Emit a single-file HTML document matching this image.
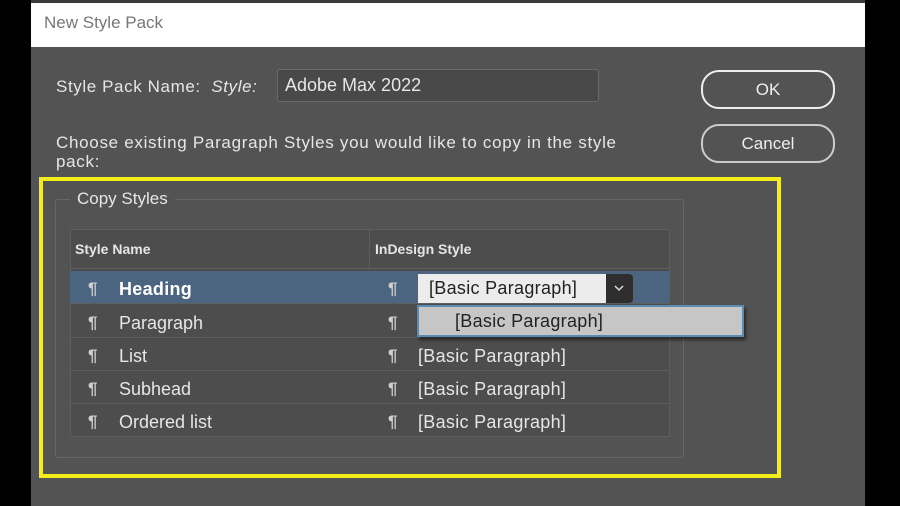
<!DOCTYPE html>
<html><head><style>
body{margin:0;width:900px;height:506px;background:#000;position:relative;overflow:hidden;font-family:"Liberation Sans",sans-serif;}
.a{position:absolute;}
.t{color:#e6e6e6;font-size:17px;white-space:nowrap;}
.row{position:absolute;left:70px;width:600px;height:32px;border-bottom:1px solid #5e5e5e;}
.pm{position:absolute;color:#cfcfcf;font-size:17px;font-weight:bold;}
</style></head><body>
<div class="a" style="left:31px;top:0;width:834px;height:3px;background:#3a3a3a"></div>
<div class="a" style="left:31px;top:3px;width:834px;height:44px;background:#fff"></div>
<div class="a" style="left:44px;top:13px;font-size:17px;color:#777">New Style Pack</div>
<div class="a" style="left:31px;top:47px;width:834px;height:459px;background:#535353"></div>
<div class="a t" style="left:56px;top:77px;letter-spacing:0.6px">Style Pack Name:&nbsp;&nbsp;<i>Style:</i></div>
<div class="a" style="left:277px;top:69px;width:320px;height:31px;background:#494949;border:1px solid #6a6a6a;border-radius:3px"></div>
<div class="a t" style="left:285px;top:75px;font-size:18px">Adobe Max 2022</div>
<div class="a" style="left:701px;top:70px;width:130px;height:35px;border:2px solid #eee;border-radius:18px;color:#eee;font-size:17px;text-align:center;line-height:35px">OK</div>
<div class="a" style="left:701px;top:124px;width:130px;height:35px;border:2px solid #ccc;border-radius:18px;color:#eee;font-size:17px;text-align:center;line-height:35px">Cancel</div>
<div class="a t" style="left:56px;top:133px;line-height:19px;letter-spacing:0.7px">Choose existing Paragraph Styles you would like to copy in the style<br>pack:</div>
<div class="a" style="left:55px;top:199px;width:629px;height:259px;border:1px solid #666;border-radius:3px;box-sizing:border-box"></div>
<div class="a t" style="left:70px;top:189px;background:#535353;padding:0 7px">Copy Styles</div>
<div class="a" style="left:70px;top:229px;width:600px;height:208px;background:#4d4d4d;border:1px solid #5e5e5e;box-sizing:border-box"></div>
<div class="a" style="left:369px;top:230px;width:1px;height:38px;background:#5e5e5e"></div>
<div class="a" style="left:70px;top:268px;width:600px;height:1px;background:#5e5e5e"></div>
<div class="a t" style="left:75px;top:241px;font-size:14px;font-weight:bold">Style Name</div>
<div class="a t" style="left:375px;top:241px;font-size:14px;font-weight:bold">InDesign Style</div>
<div class="row" style="top:271px;background:#4b6480"></div>
<div class="row" style="top:305px"></div>
<div class="row" style="top:338px"></div>
<div class="row" style="top:371px"></div>
<div class="row" style="top:404px;border:none"></div>
<div class="pm" style="left:88px;top:279px">¶</div><div class="a t" style="left:119px;top:279px;font-weight:bold;color:#fff;font-size:18px;letter-spacing:0.3px">Heading</div>
<div class="pm" style="left:88px;top:313px">¶</div><div class="a t" style="left:119px;top:313px;font-size:18px">Paragraph</div>
<div class="pm" style="left:88px;top:346px">¶</div><div class="a t" style="left:119px;top:346px;font-size:18px">List</div>
<div class="pm" style="left:88px;top:379px">¶</div><div class="a t" style="left:119px;top:379px;font-size:18px">Subhead</div>
<div class="pm" style="left:88px;top:412px">¶</div><div class="a t" style="left:119px;top:412px;font-size:18px">Ordered list</div>
<div class="pm" style="left:388px;top:279px">¶</div><div class="pm" style="left:388px;top:313px">¶</div><div class="pm" style="left:388px;top:346px">¶</div><div class="pm" style="left:388px;top:379px">¶</div><div class="pm" style="left:388px;top:412px">¶</div>
<div class="a" style="left:418px;top:274px;width:188px;height:29px;background:#ececec"></div>
<div class="a" style="left:606px;top:274px;width:27px;height:29px;background:#2e2e2e;border-radius:0 4px 4px 0"></div>
<svg class="a" style="left:613px;top:284px" width="12" height="8"><path d="M2 2 L6 6 L10 2" stroke="#ddd" stroke-width="1.5" fill="none"/></svg>
<div class="a t" style="left:429px;top:278px;color:#222;font-size:18px;letter-spacing:0.3px">[Basic Paragraph]</div>
<div class="a" style="left:417px;top:305px;width:327px;height:32px;background:#5a8db5;box-shadow:2px 3px 3px rgba(0,0,0,.5)"></div>
<div class="a" style="left:419px;top:307px;width:323px;height:28px;background:#c6c6c6"></div>
<div class="a t" style="left:455px;top:311px;color:#222;font-size:18px;letter-spacing:0.3px">[Basic Paragraph]</div>
<div class="a t" style="left:418px;top:346px;font-size:18px;letter-spacing:0.3px">[Basic Paragraph]</div>
<div class="a t" style="left:418px;top:379px;font-size:18px;letter-spacing:0.3px">[Basic Paragraph]</div>
<div class="a t" style="left:418px;top:412px;font-size:18px;letter-spacing:0.3px">[Basic Paragraph]</div>
<div class="a" style="left:39px;top:177px;width:742px;height:301px;border:4px solid #f5ec1c;box-sizing:border-box"></div>
</body></html>
